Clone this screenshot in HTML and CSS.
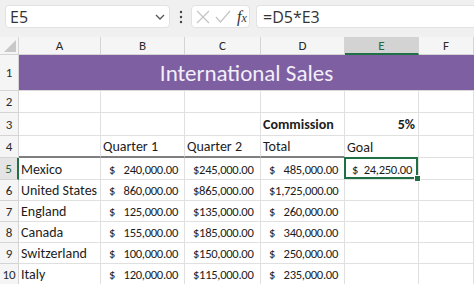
FILE: index.html
```html
<!DOCTYPE html>
<html>
<head>
<meta charset="utf-8">
<link rel="stylesheet" href="styles.css">
</head>
<body>
<div class="toolbar">
  <div class="namebox">
    <span>E5</span>
    <svg class="chev" width="10" height="6" viewBox="0 0 10 6"><path d="M1 1 L5 5 L9 1" fill="none" stroke="#555" stroke-width="1.3"/></svg>
  </div>
  <div class="dots">
    <svg width="4" height="14" viewBox="0 0 4 14"><circle cx="2" cy="2" r="1.2" fill="#444"/><circle cx="2" cy="7" r="1.2" fill="#444"/><circle cx="2" cy="12" r="1.2" fill="#444"/></svg>
  </div>
  <div class="fxbox">
    <svg width="14" height="14" viewBox="0 0 14 14"><path d="M1 1 L13 13 M13 1 L1 13" stroke="#c4c4c4" stroke-width="1.2" fill="none"/></svg>
    <svg width="16" height="14" viewBox="0 0 16 14"><path d="M1 7 L5.5 12 L15 1" stroke="#c4c4c4" stroke-width="1.2" fill="none"/></svg>
    <span class="fx">f<span class="fxx">x</span></span>
  </div>
  <div class="formula">=D5*E3</div>
</div>
<div class="sheet">
  <div class="corner"><svg width="12" height="12" viewBox="0 0 12 12"><path d="M12 0 L12 12 L0 12 Z" fill="#c8c8c8"/></svg></div>
  <div class="h">A</div><div class="h">B</div><div class="h">C</div><div class="h">D</div><div class="h hsel">E</div><div class="h">F</div>

  <div class="r">1</div><div class="title">International Sales</div>

  <div class="r">2</div><div class="c"></div><div class="c"></div><div class="c"></div><div class="c"></div><div class="c"></div><div class="c"></div>

  <div class="r">3</div><div class="c"></div><div class="c"></div><div class="c"></div><div class="c b">Commission</div><div class="c b num">5%</div><div class="c"></div>

  <div class="r">4</div><div class="c rb"></div><div class="c rb">Quarter 1</div><div class="c rb">Quarter 2</div><div class="c rb">Total</div><div class="c">Goal</div><div class="c"></div>

  <div class="r rsel">5</div><div class="c">Mexico</div><div class="c m"><span>$</span><span>240,000.00</span></div><div class="c m tight"><span>$245,000.00</span></div><div class="c m"><span>$</span><span>485,000.00</span></div><div class="c m sel"><span>$</span><span>24,250.00</span></div><div class="c"></div>

  <div class="r">6</div><div class="c">United States</div><div class="c m"><span>$</span><span>860,000.00</span></div><div class="c m tight"><span>$865,000.00</span></div><div class="c m"><span>$</span><span>1,725,000.00</span></div><div class="c"></div><div class="c"></div>

  <div class="r">7</div><div class="c">England</div><div class="c m"><span>$</span><span>125,000.00</span></div><div class="c m tight"><span>$135,000.00</span></div><div class="c m"><span>$</span><span>260,000.00</span></div><div class="c"></div><div class="c"></div>

  <div class="r">8</div><div class="c">Canada</div><div class="c m"><span>$</span><span>155,000.00</span></div><div class="c m tight"><span>$185,000.00</span></div><div class="c m"><span>$</span><span>340,000.00</span></div><div class="c"></div><div class="c"></div>

  <div class="r">9</div><div class="c">Switzerland</div><div class="c m"><span>$</span><span>100,000.00</span></div><div class="c m tight"><span>$150,000.00</span></div><div class="c m"><span>$</span><span>250,000.00</span></div><div class="c"></div><div class="c"></div>

  <div class="r">10</div><div class="c">Italy</div><div class="c m"><span>$</span><span>120,000.00</span></div><div class="c m tight"><span>$115,000.00</span></div><div class="c m"><span>$</span><span>235,000.00</span></div><div class="c"></div><div class="c"></div>
</div>
</body>
</html>
```
FILE: styles.css
```css
* { box-sizing: border-box; }
html, body { margin: 0; padding: 0; }
body {
  width: 474px;
  height: 284px;
  overflow: hidden;
  background: #f0f0f0;
  font-family: Carlito, "Liberation Sans Narrow", "Open Sans", sans-serif;
  color: #1c1c1c;
}
.toolbar {
  display: flex;
  align-items: center;
  height: 37px;
  padding: 5px 0 9px 5px;
  font-family: "Open Sans", sans-serif;
}
.namebox {
  width: 165px;
  height: 23px;
  background: #fff;
  border: 1px solid #e2e2e2;
  border-radius: 4px;
  display: flex;
  align-items: center;
  justify-content: space-between;
  padding: 0 4px 0 4px;
  font-size: 16px;
  color: #333;
}
.dots {
  width: 21px;
  display: flex;
  justify-content: center;
  align-items: center;
  height: 23px;
}
.fxbox {
  width: 59px;
  height: 23px;
  background: #fff;
  border: 1px solid #e2e2e2;
  border-radius: 4px;
  display: flex;
  align-items: center;
  gap: 5px;
  padding-left: 4px;
}
.fx {
  font-family: "Liberation Serif", serif;
  font-style: italic;
  font-size: 16px;
  color: #333;
  margin-left: 1px;
}
.fxx { font-size: 12px; }
.formula {
  flex: 1;
  margin-left: 6px;
  height: 23px;
  background: #fff;
  border: 1px solid #e2e2e2;
  border-right: none;
  border-radius: 4px 0 0 4px;
  display: flex;
  align-items: center;
  padding-left: 6px;
  font-size: 16px;
  color: #333;
}
.sheet {
  display: grid;
  grid-template-columns: 19px 82px 84px 76px 84px 74px 1fr;
  grid-template-rows: 18px 36px 22px 23px 22px 22px 21px 21px 21px 21px 21px;
  background: #fff;
  font-size: 14px;
}
.corner {
  background: #f5f5f5;
  border-right: 1px solid #d4d4d4;
  border-bottom: 1px solid #d4d4d4;
  display: flex;
  align-items: flex-end;
  justify-content: flex-end;
  padding: 0 2px 2px 0;
}
.h {
  background: #f5f5f5;
  border-right: 1px solid #d4d4d4;
  border-bottom: 1px solid #d4d4d4;
  display: flex;
  align-items: center;
  justify-content: center;
  font-size: 13px;
  color: #2a2a2a;
}
.hsel {
  background: #d3d3d3;
  border-bottom: 2px solid #1f7145;
  color: #1f6b41;
}
.r {
  background: #f5f5f5;
  border-right: 1px solid #d4d4d4;
  border-bottom: 1px solid #d4d4d4;
  display: flex;
  align-items: center;
  justify-content: center;
  font-size: 13px;
  color: #2a2a2a;
}
.rsel {
  background: #e4e4e4;
  border-right: 2px solid #1f7145;
  color: #1f6b41;
}
.title {
  grid-column: 2 / -1;
  background: #7d5fa2;
  color: #f3eff8;
  font-size: 23px;
  display: flex;
  align-items: center;
  justify-content: center;
  border-bottom: 1px solid #d9d9d9;
}
.c {
  border-right: 1px solid #e0e0e0;
  border-bottom: 1px solid #e0e0e0;
  display: flex;
  align-items: center;
  padding: 1px 2px 0 2px;
  white-space: nowrap;
  overflow: visible;
}
.b { font-weight: bold; }
.num { justify-content: flex-end; padding-right: 3px; }
.m {
  justify-content: space-between;
  padding: 1px 6px 0 8px;
  font-size: 12.6px;
  letter-spacing: -0.3px;
}
.tight { justify-content: flex-start; }
.rb { border-bottom: 2px solid #7f7f7f; }
.sel { position: relative; padding-left: 7px; }
.sel::before {
  content: "";
  position: absolute;
  left: -1px;
  top: -1px;
  right: 0;
  bottom: 0;
  border: 2px solid #1f7145;
}
.sel::after {
  content: "";
  position: absolute;
  right: -3px;
  bottom: -3px;
  width: 5px;
  height: 5px;
  background: #1f7145;
  border: 1px solid #fff;
}
```
